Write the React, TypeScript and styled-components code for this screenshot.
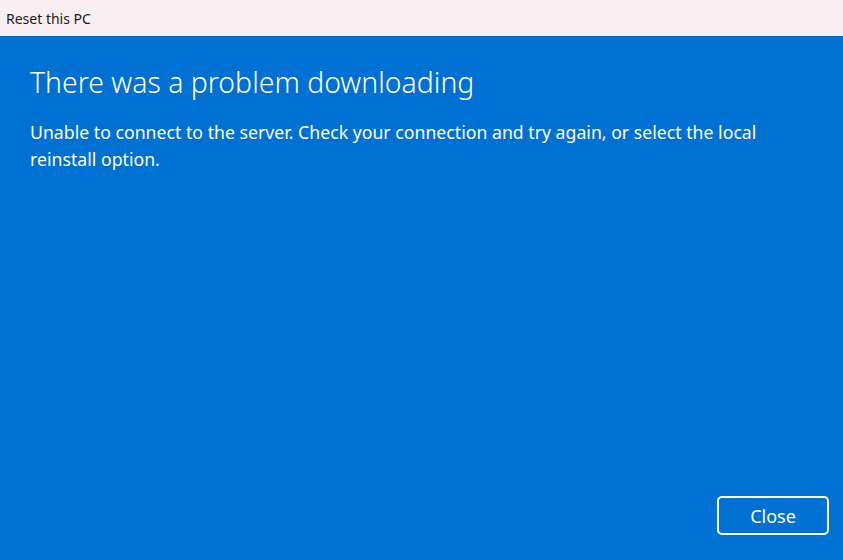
import React from 'react'
import styled, { createGlobalStyle } from 'styled-components'

const GlobalStyle = createGlobalStyle`
  html, body {
    margin: 0;
    padding: 0;
    height: 100%;
  }
  #root {
    height: 100%;
  }
  body {
    font-family: "Noto Sans", "Open Sans", "DejaVu Sans", sans-serif;
    overflow: hidden;
  }
`

const Window = styled.div`
  display: flex;
  flex-direction: column;
  width: 843px;
  height: 560px;
  background: #0070d3;
`

const TitleBar = styled.div`
  height: 36px;
  flex-shrink: 0;
  display: flex;
  align-items: center;
  padding-left: 6px;
  background: #f9eef2;
  color: #1a1a1a;
  font-size: 14px;
`

const Content = styled.div`
  flex: 1;
  display: flex;
  flex-direction: column;
  padding: 27px 30px 25px 30px;
  color: #ffffff;
`

const Heading = styled.h1`
  margin: 0;
  font-size: 28.4px;
  font-weight: 300;
  line-height: 38px;
`

const Message = styled.p`
  margin: 18px 0 0 0;
  font-size: 17.7px;
  line-height: 27px;
  max-width: 778px;
`

const Footer = styled.div`
  margin-top: auto;
  display: flex;
  justify-content: flex-end;
`

const Button = styled.button`
  width: 112px;
  height: 39px;
  margin-right: -16px;
  border: 2px solid #ffffff;
  border-radius: 5px;
  background: transparent;
  color: #ffffff;
  font-family: inherit;
  font-size: 18px;
  cursor: pointer;
`

export default function App() {
  return (
    <>
      <GlobalStyle />
      <Window>
        <TitleBar>Reset this PC</TitleBar>
        <Content>
          <Heading>There was a problem downloading</Heading>
          <Message>
            Unable to connect to the server. Check your connection and try again, or select the local
            reinstall option.
          </Message>
          <Footer>
            <Button>Close</Button>
          </Footer>
        </Content>
      </Window>
    </>
  )
}
